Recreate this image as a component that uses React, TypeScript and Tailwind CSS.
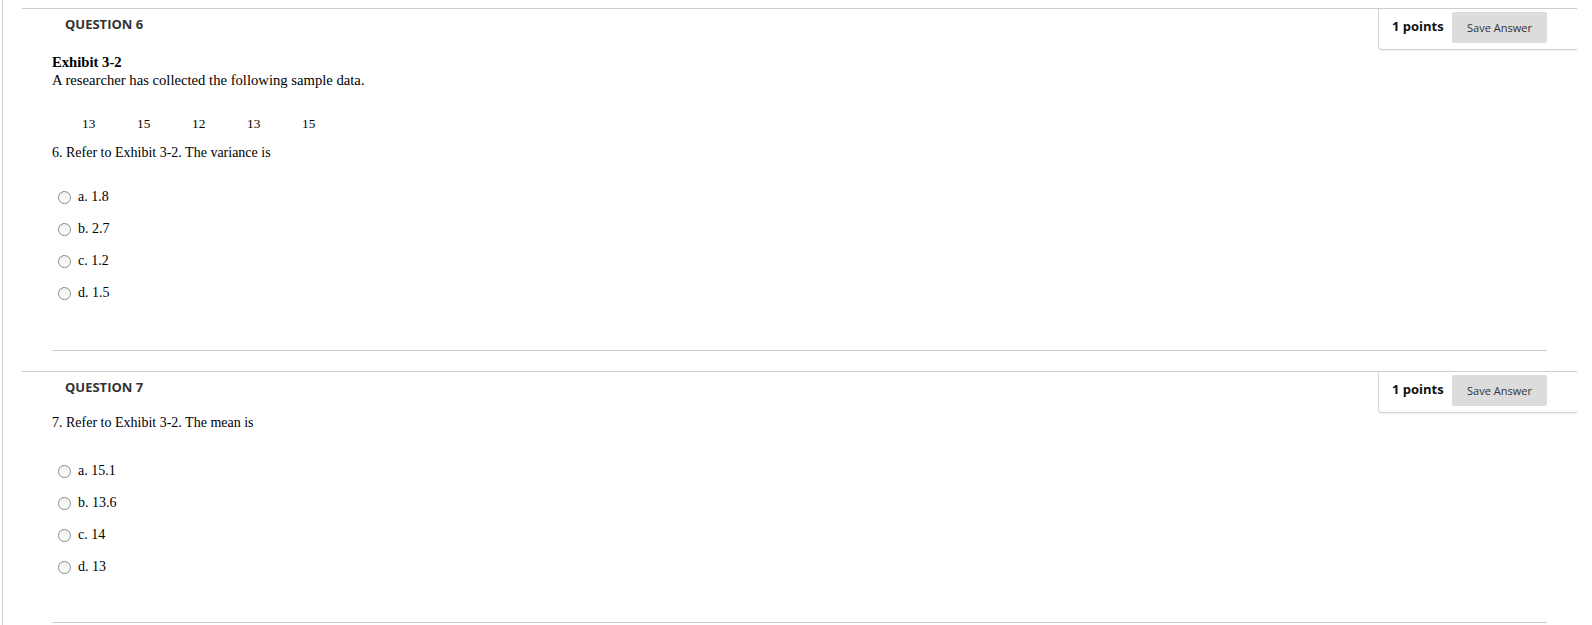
const serif = { fontFamily: '"Liberation Serif", "Times New Roman", serif' };

function Header({ n }: { n: number }) {
  return (
    <div className="w-[1555px] border-t border-[#cdcdcd] flex justify-between font-['Open_Sans',sans-serif]">
      <h2 className="pl-[43px] pt-[6px] text-[13px] leading-[18px] font-bold text-[#333]">QUESTION {n}</h2>
      <div className="w-[199px] h-[41px] border-l border-b border-[#d5d5d5] rounded-bl-[4px] shadow-[0_1px_1px_rgba(0,0,0,0.06)] flex items-start pl-[13px] pt-[3px]">
        <span className="mt-[5px] text-[13px] leading-[18px] font-bold text-[#111]">1 points</span>
        <button className="ml-auto mr-[30px] w-[95px] h-[31px] pt-[2px] bg-[#dcdcdc] rounded-[2px] text-[11px] text-[#333]">
          Save Answer
        </button>
      </div>
    </div>
  );
}

function Options({ items }: { items: string[] }) {
  return (
    <div>
      {items.map((t) => (
        <label key={t} className="h-[32px] flex items-center">
          <span className="ml-[6px] w-[13px] h-[13px] rounded-full border border-[#8a8a8a] bg-gradient-to-b from-[#f0f0f0] to-white" />
          <span className="ml-[7px] text-[14px] text-black">{t}</span>
        </label>
      ))}
    </div>
  );
}

export default function App() {
  return (
    <div className="min-h-screen bg-white">
      <div className="ml-[2px] border-l border-[#cfcfcf] pl-[19px] pt-[8px] min-h-[625px]" style={serif}>
        {/* Question 6 */}
        <Header n={6} />
        <div className="pl-[30px] text-[14px] leading-[18px] text-black">
          <p className="mt-[3px] font-bold text-[14.67px]">Exhibit 3-2</p>
          <p className="text-[14.67px]">A researcher has collected the following sample data.</p>
          <div className="mt-[26px] pl-[30px] flex text-[13.33px]">
            {[13, 15, 12, 13, 15].map((v, i) => (
              <span key={i} className="w-[55px]">{v}</span>
            ))}
          </div>
          <p className="mt-[11px]">6. Refer to Exhibit 3-2. The variance is</p>
          <div className="mt-[19px]">
            <Options items={["a. 1.8", "b. 2.7", "c. 1.2", "d. 1.5"]} />
          </div>
          <div className="mt-[41px] w-[1495px] border-t border-[#cdcdcd]" />
        </div>

        {/* Question 7 */}
        <div className="mt-[20px]">
          <Header n={7} />
          <div className="pl-[30px] text-[14px] leading-[18px] text-black">
            <p className="mt-[1px]">7. Refer to Exhibit 3-2. The mean is</p>
            <div className="mt-[23px]">
              <Options items={["a. 15.1", "b. 13.6", "c. 14", "d. 13"]} />
            </div>
            <div className="mt-[39px] w-[1495px] border-t border-[#cdcdcd]" />
          </div>
        </div>
      </div>
    </div>
  );
}
